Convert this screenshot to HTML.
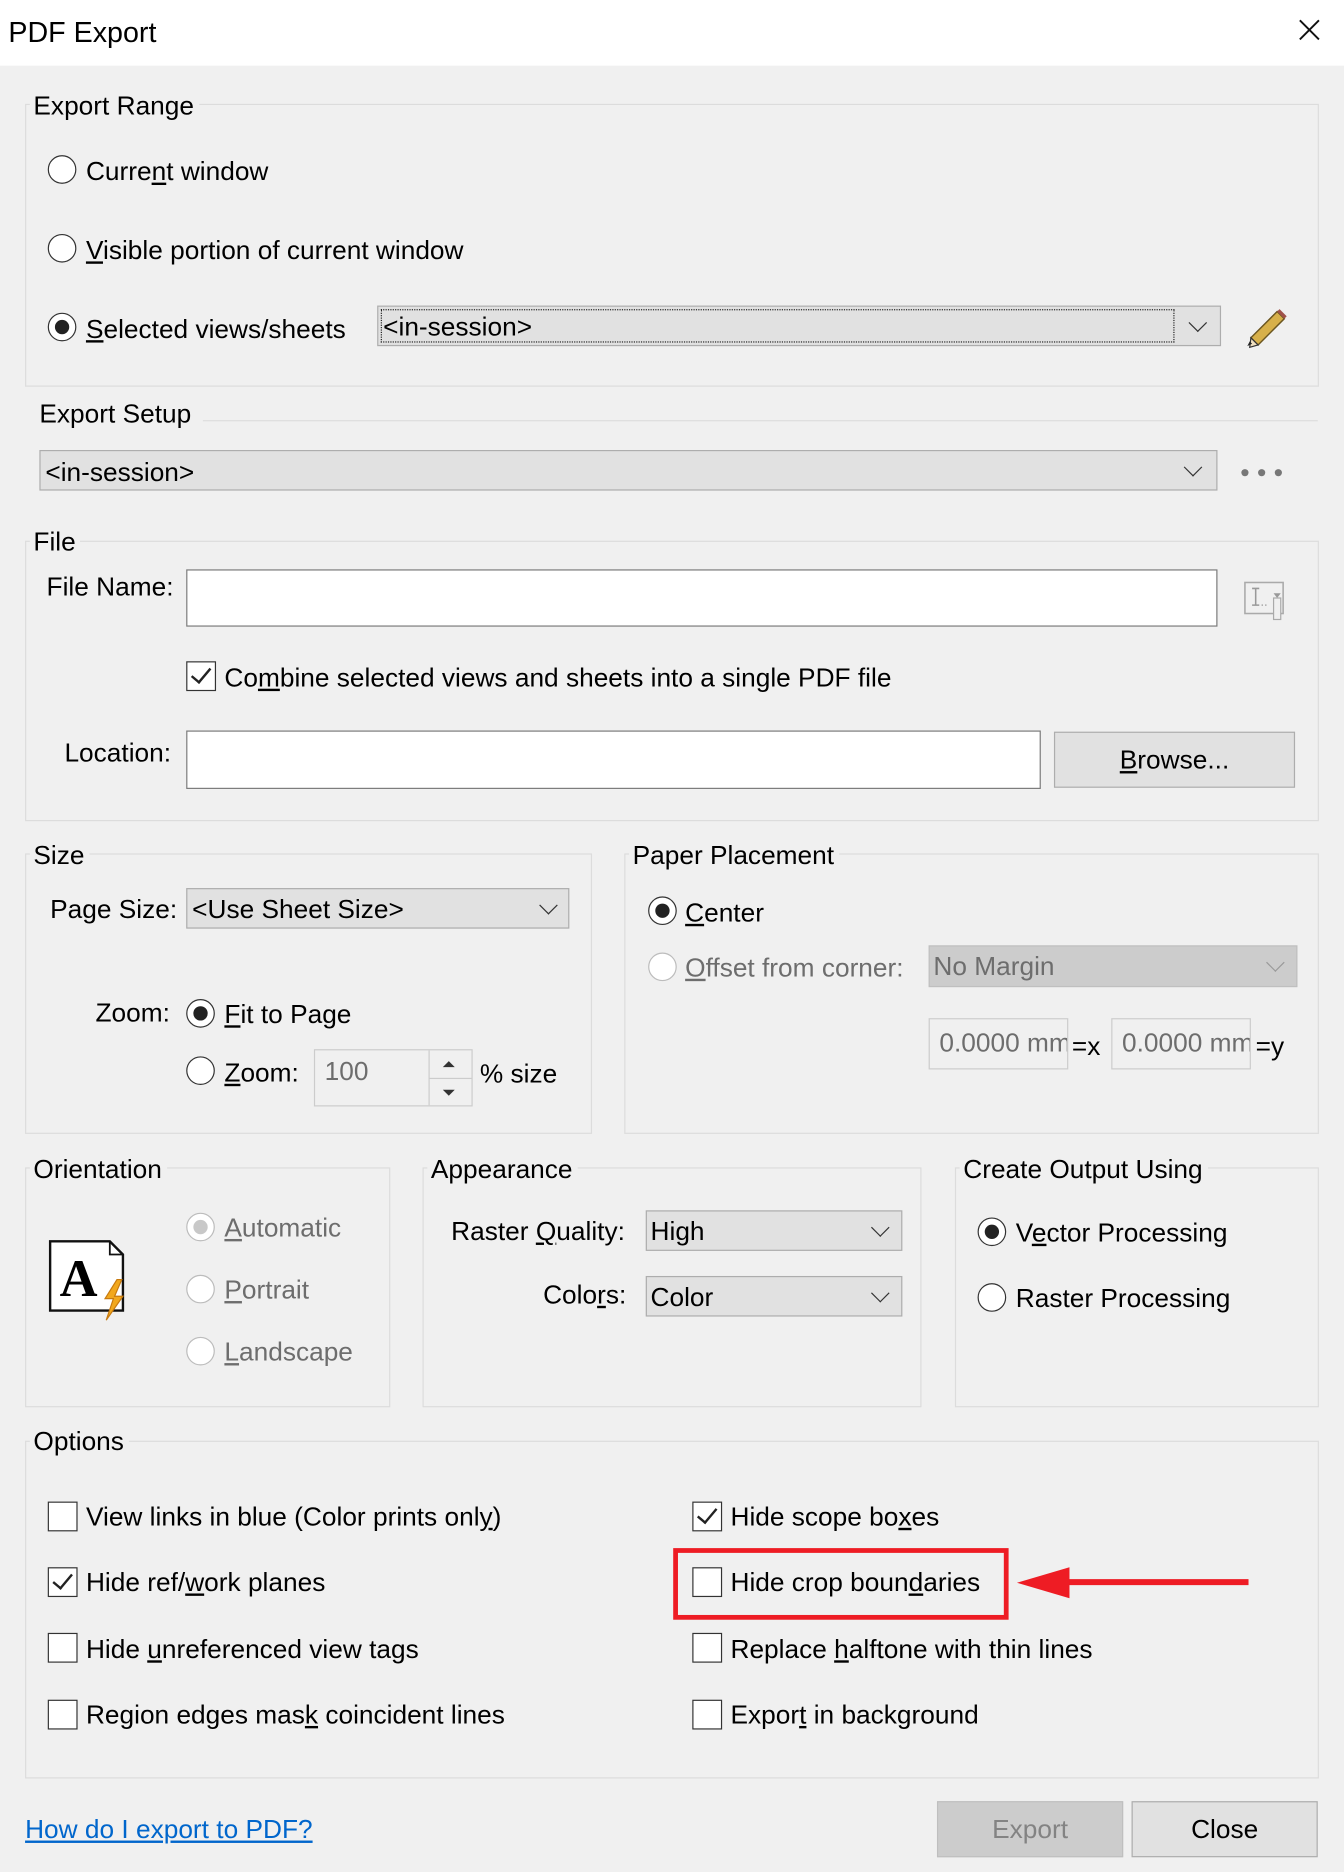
<!DOCTYPE html>
<html><head><meta charset="utf-8"><style>
html,body{margin:0;padding:0;width:1344px;height:1871px;overflow:hidden;background:#f0f0f0}
#w{position:absolute;left:0;top:0;width:1126px;height:1568px;transform:scale(1.19361);transform-origin:0 0;font-family:"Liberation Sans",sans-serif;font-size:22px;color:#000;background:#f0f0f0}
#w div,#w span{position:absolute}
.t{height:30px;line-height:30px;white-space:nowrap;margin-top:1px}
.g{border:1px solid #dcdcdc}
.lb{background:#f0f0f0;padding:0 4px 0 3px}
.r{width:24px;height:24px;border:1.5px solid #333;border-radius:50%;background:#fff;box-sizing:border-box}
.r.on::after{content:"";position:absolute;left:4.5px;top:4.5px;width:12px;height:12px;border-radius:50%;background:#222}
.r.dis{border-color:#bcbcbc}
.r.dis.on::after{background:#c8c8c8}
.c{width:25px;height:25px;border:1.5px solid #333;background:#fff;box-sizing:border-box}
.c.on::after{content:"";position:absolute;left:7px;top:1px;width:7px;height:14px;border:solid #222;border-width:0 2px 2px 0;transform:rotate(40deg)}
.dd{background:#e1e1e1;border:1px solid #adadad;box-sizing:border-box}
.ch{width:10px;height:10px;border:solid #333;border-width:0 1.3px 1.3px 0;transform:rotate(45deg)}
.in{background:#fff;border:1px solid #7a7a7a;box-sizing:border-box}
.gr{color:#6d6d6d}
u{text-decoration:underline;text-underline-offset:2px}
.btn{background:#e1e1e1;border:1px solid #adadad;box-sizing:border-box;text-align:center}
</style></head><body><div id="w">
<div style="left:0;top:0;width:1126px;height:55px;background:#fff"></div>
<div class="t" style="left:7px;top:12px;font-size:24px">PDF Export</div>
<svg style="position:absolute;left:1088px;top:16px" width="18" height="18"><path d="M1 1L17 17M17 1L1 17" stroke="#111" stroke-width="1.6"/></svg>

<div class="g" style="left:21px;top:87px;width:1082px;height:235px"></div>
<div class="t lb" style="left:25px;top:73px">Export Range</div>
<div class="r" style="left:40px;top:130px"></div><div class="t" style="left:72px;top:128px">Curre<u>n</u>t window</div>
<div class="r" style="left:40px;top:196px"></div><div class="t" style="left:72px;top:194px"><u>V</u>isible portion of current window</div>
<div class="r on" style="left:40px;top:262px"></div><div class="t" style="left:72px;top:260px"><u>S</u>elected views/sheets</div>
<div class="dd" style="left:316px;top:256px;width:707px;height:34px"><div style="left:2px;top:2px;width:665px;height:28px;border:1px dotted #222;box-sizing:border-box"></div><div class="t" style="left:4px;top:1px">&lt;in-session&gt;</div><div class="ch" style="left:681px;top:8px"></div></div>
<svg style="position:absolute;left:1042px;top:257px" width="38" height="36"><path d="M6 26L28 4l6 6L12 32z" fill="#d7b04a" stroke="#6b5620" stroke-width="1.2"/><path d="M28 4l6 6 2-2-6-6z" fill="#a0524a"/><path d="M6 26l6 6-7 2z" fill="#f0e0c0" stroke="#333" stroke-width="1"/><path d="M3 33l2-4 2 2z" fill="#222"/></svg>

<div class="t" style="left:33px;top:331px">Export Setup</div>
<div style="left:170px;top:352px;width:934px;height:1px;background:#dcdcdc"></div>
<div class="dd" style="left:33px;top:377px;width:987px;height:34px"><div class="t" style="left:4px;top:2px">&lt;in-session&gt;</div><div class="ch" style="left:960px;top:8px"></div></div>
<div style="left:1040px;top:393px;width:6px;height:6px;border-radius:50%;background:#777"></div>
<div style="left:1054px;top:393px;width:6px;height:6px;border-radius:50%;background:#777"></div>
<div style="left:1068px;top:393px;width:6px;height:6px;border-radius:50%;background:#777"></div>

<div class="g" style="left:21px;top:453px;width:1082px;height:233px"></div>
<div class="t lb" style="left:25px;top:438px">File</div>
<div class="t" style="left:39px;top:476px">File Name:</div>
<div class="in" style="left:156px;top:477px;width:864px;height:48px"></div>
<svg style="position:absolute;left:1042px;top:487px" width="36" height="34"><rect x="1" y="1" width="32" height="26" fill="none" stroke="#aaa" stroke-width="1.3"/><path d="M7 6h6M10 6v14M7 20h6M15 20h1M18 20h1" stroke="#999" stroke-width="1.3"/><path d="M25 10h6l-3 4z" fill="#999"/><rect x="25" y="14" width="6" height="18" fill="#f0f0f0" stroke="#aaa"/></svg>
<div class="c on" style="left:156px;top:554px"></div><div class="t" style="left:188px;top:552px">Co<u>m</u>bine selected views and sheets into a single PDF file</div>
<div class="t" style="left:54px;top:615px">Location:</div>
<div class="in" style="left:156px;top:612px;width:716px;height:49px"></div>
<div class="btn t" style="left:883px;top:613px;width:202px;height:47px;line-height:46px;margin-top:0"><u>B</u>rowse...</div>

<div class="g" style="left:21px;top:715px;width:473px;height:233px"></div>
<div class="t lb" style="left:25px;top:701px">Size</div>
<div class="t" style="left:42px;top:746px">Page Size:</div>
<div class="dd" style="left:156px;top:744px;width:321px;height:34px"><div class="t" style="left:4px;top:1px">&lt;Use Sheet Size&gt;</div><div class="ch" style="left:297px;top:8px"></div></div>
<div class="t" style="left:80px;top:833px">Zoom:</div>
<div class="r on" style="left:156px;top:837px"></div><div class="t" style="left:188px;top:834px"><u>F</u>it to Page</div>
<div class="r" style="left:156px;top:885px"></div><div class="t" style="left:188px;top:883px"><u>Z</u>oom:</div>
<div style="left:263px;top:879px;width:133px;height:48px;border:1px solid #ccc;box-sizing:border-box;background:#f0f0f0"><div class="t gr" style="left:8px;top:2px">100</div><div style="left:95px;top:0;width:1px;height:46px;background:#ccc"></div><div style="left:95px;top:23px;width:36px;height:1px;background:#ccc"></div><svg style="position:absolute;left:106px;top:6px" width="12" height="36"><path d="M1 8l5-5 5 5z" fill="#333"/><path d="M1 27l5 5 5-5z" fill="#333"/></svg></div>
<div class="t" style="left:402px;top:884px">% size</div>

<div class="g" style="left:523px;top:715px;width:580px;height:233px"></div>
<div class="t lb" style="left:527px;top:701px">Paper Placement</div>
<div class="r on" style="left:543px;top:751px"></div><div class="t" style="left:574px;top:749px"><u>C</u>enter</div>
<div class="r dis" style="left:543px;top:798px"></div><div class="t gr" style="left:574px;top:795px"><u>O</u>ffset from corner:</div>
<div style="left:778px;top:792px;width:309px;height:35px;background:#cccccc;border:1px solid #bfbfbf;box-sizing:border-box"><div class="t gr" style="left:3px;top:1px">No Margin</div><div class="ch" style="left:284px;top:8px;border-color:#999"></div></div>
<div style="left:778px;top:853px;width:117px;height:43px;border:1px solid #ccc;box-sizing:border-box;overflow:hidden"><div class="t gr" style="left:8px;top:4px">0.0000 mm</div></div>
<div class="t" style="left:898px;top:861px">=x</div>
<div style="left:931px;top:853px;width:117px;height:43px;border:1px solid #ccc;box-sizing:border-box;overflow:hidden"><div class="t gr" style="left:8px;top:4px">0.0000 mm</div></div>
<div class="t" style="left:1052px;top:861px">=y</div>

<div class="g" style="left:21px;top:978px;width:304px;height:199px"></div>
<div class="t lb" style="left:25px;top:964px">Orientation</div>
<svg style="position:absolute;left:40px;top:1038px" width="74" height="72"><path d="M2 2h50l11 11v47H2z" fill="#fff" stroke="#111" stroke-width="2"/><path d="M52 2v11h11" fill="none" stroke="#111" stroke-width="1.5"/><text x="10" y="48" font-family="Liberation Serif,serif" font-size="44" font-weight="bold">A</text><path d="M58 34l-10 16h7l-6 18 14-20h-7l6-14z" fill="#f2a81d" stroke="#c77a10" stroke-width="1"/></svg>
<div class="r dis on" style="left:156px;top:1016px"></div><div class="t gr" style="left:188px;top:1013px"><u>A</u>utomatic</div>
<div class="r dis" style="left:156px;top:1068px"></div><div class="t gr" style="left:188px;top:1065px"><u>P</u>ortrait</div>
<div class="r dis" style="left:156px;top:1120px"></div><div class="t gr" style="left:188px;top:1117px"><u>L</u>andscape</div>

<div class="g" style="left:354px;top:978px;width:416px;height:199px"></div>
<div class="t lb" style="left:358px;top:964px">Appearance</div>
<div class="t" style="left:378px;top:1016px">Raster <u>Q</u>uality:</div>
<div class="dd" style="left:541px;top:1014px;width:215px;height:34px"><div class="t" style="left:3px;top:1px">High</div><div class="ch" style="left:190px;top:8px"></div></div>
<div class="t" style="left:455px;top:1069px">Colo<u>r</u>s:</div>
<div class="dd" style="left:541px;top:1069px;width:215px;height:34px"><div class="t" style="left:3px;top:1px">Color</div><div class="ch" style="left:190px;top:8px"></div></div>

<div class="g" style="left:800px;top:978px;width:303px;height:199px"></div>
<div class="t lb" style="left:804px;top:964px">Create Output Using</div>
<div class="r on" style="left:819px;top:1020px"></div><div class="t" style="left:851px;top:1017px">V<u>e</u>ctor Processing</div>
<div class="r" style="left:819px;top:1075px"></div><div class="t" style="left:851px;top:1072px">Raster Processin<u>g</u></div>

<div class="g" style="left:21px;top:1207px;width:1082px;height:281px"></div>
<div class="t lb" style="left:25px;top:1192px">Options</div>
<div class="c" style="left:40px;top:1258px"></div><div class="t" style="left:72px;top:1255px">View links in blue (Color prints onl<u>y</u>)</div>
<div class="c on" style="left:40px;top:1313px"></div><div class="t" style="left:72px;top:1310px">Hide ref/<u>w</u>ork planes</div>
<div class="c" style="left:40px;top:1368px"></div><div class="t" style="left:72px;top:1366px">Hide <u>u</u>nreferenced view tags</div>
<div class="c" style="left:40px;top:1424px"></div><div class="t" style="left:72px;top:1421px">Region edges mas<u>k</u> coincident lines</div>
<div class="c on" style="left:580px;top:1258px"></div><div class="t" style="left:612px;top:1255px">Hide scope bo<u>x</u>es</div>
<div class="c" style="left:580px;top:1313px"></div><div class="t" style="left:612px;top:1310px">Hide crop boun<u>d</u>aries</div>
<div class="c" style="left:580px;top:1368px"></div><div class="t" style="left:612px;top:1366px">Replace <u>h</u>alftone with thin lines</div>
<div class="c" style="left:580px;top:1424px"></div><div class="t" style="left:612px;top:1421px">Expor<u>t</u> in background</div>
<div style="left:564px;top:1297px;width:281px;height:60px;border:4px solid #ee1c24;box-sizing:border-box"></div>
<svg style="position:absolute;left:850px;top:1310px" width="200" height="32"><path d="M40 13H196v5H40z" fill="#ee1c24"/><path d="M2 16L46 3v26z" fill="#ee1c24"/></svg>

<div class="t" style="left:21px;top:1517px;color:#0066cc;text-decoration:underline">How do I export to PDF?</div>
<div class="btn t gr" style="left:785px;top:1509px;width:156px;height:47px;line-height:46px;margin-top:0;background:#cccccc;border-color:#bfbfbf;color:#838383">Export</div>
<div class="btn t" style="left:948px;top:1509px;width:156px;height:47px;line-height:46px;margin-top:0">Close</div>
</div></body></html>
